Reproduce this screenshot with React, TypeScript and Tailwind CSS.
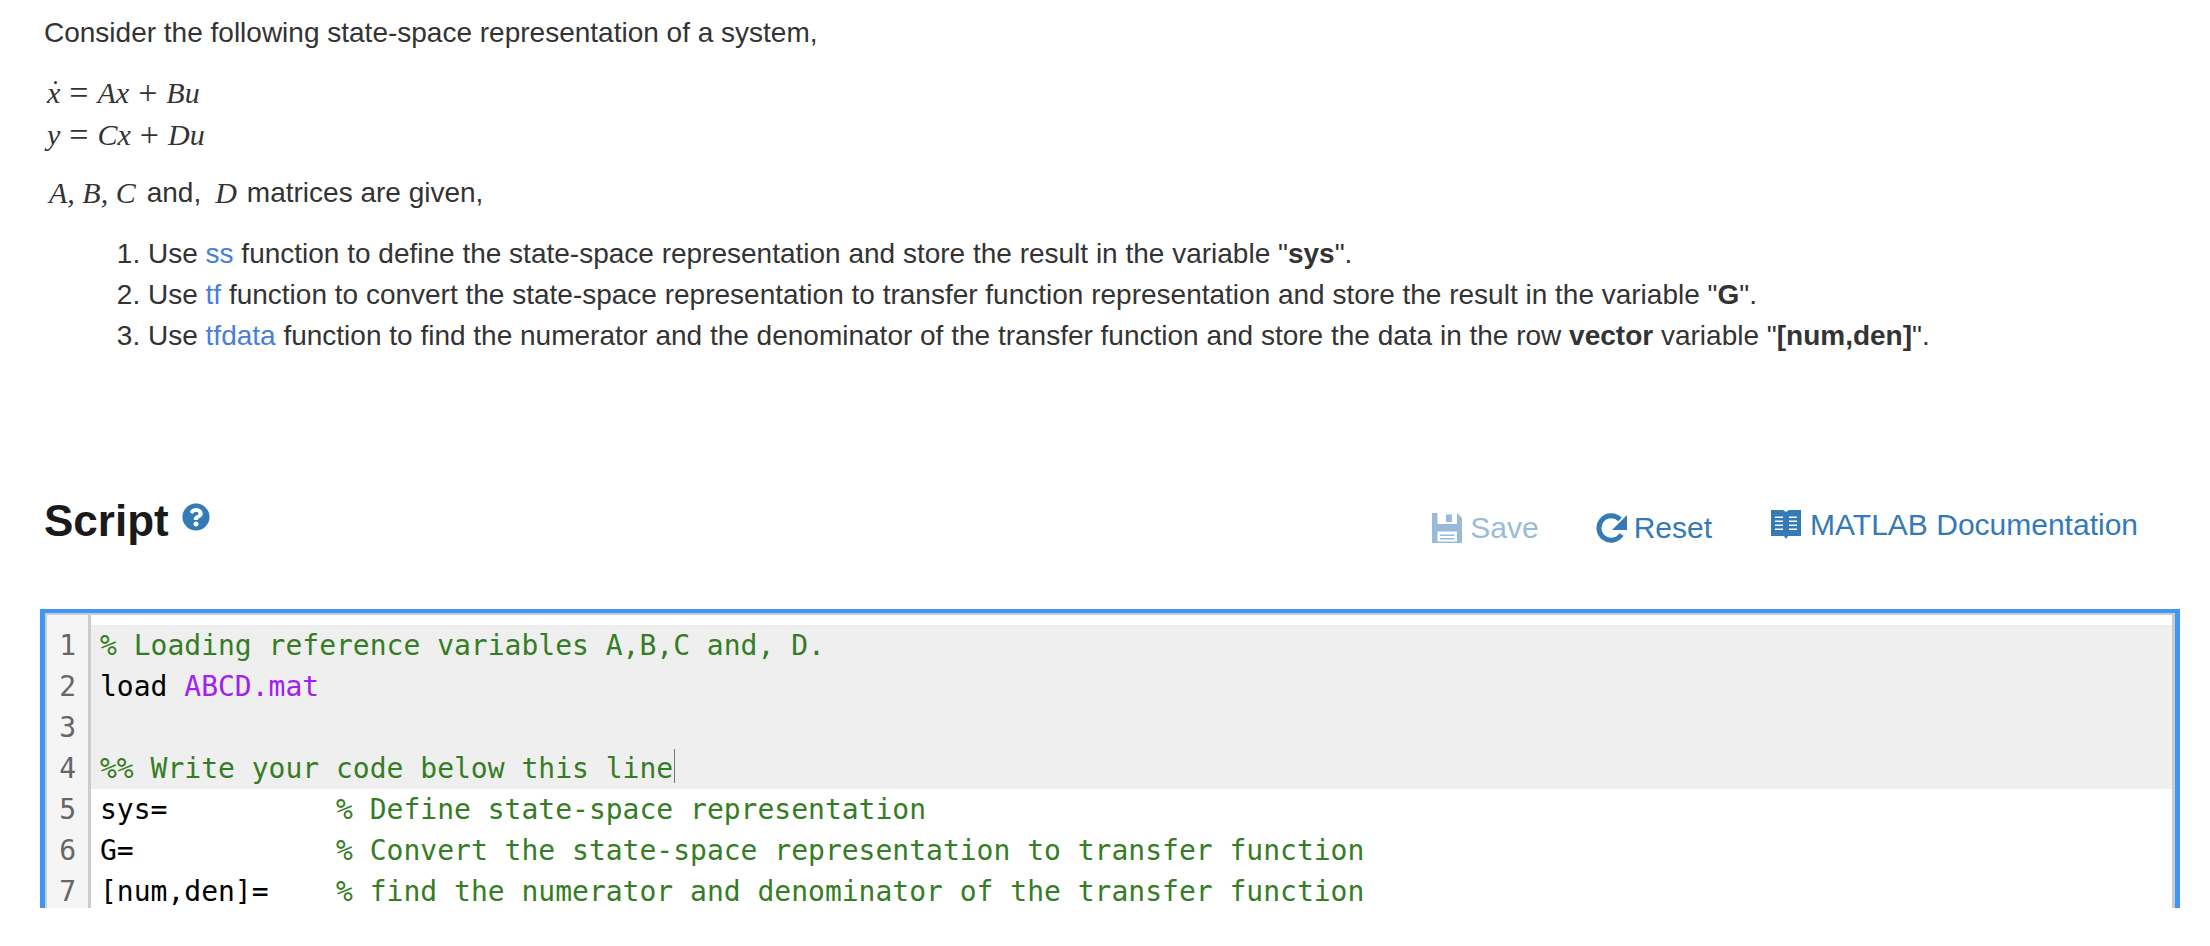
import { FaQuestionCircle } from "react-icons/fa";

const bodyFont = "font-['Liberation_Sans',Arial,sans-serif]";
const mathFont = "font-['Liberation_Serif','Times_New_Roman',serif] italic";

function SaveIcon() {
  return (
    <svg width="30" height="30" viewBox="0 0 30 30" className="shrink-0">
      <path
        fillRule="evenodd"
        fill="currentColor"
        d="M0 0H25L30 5V30H0ZM5.5 0V11H25V0ZM14 1.5H20V9H14ZM5.5 18.5V28.5H25V18.5ZM8 21.5H22.5V23H8ZM8 25H22.5V26.5H8Z"
      />
    </svg>
  );
}

function ResetIcon() {
  return (
    <svg width="31" height="30" viewBox="0 0 31 30" className="shrink-0">
      <path d="M25.5 21.5A12.2 12.2 0 1 1 24 6.5" fill="none" stroke="currentColor" strokeWidth="5" />
      <path d="M31 2V17H16Z" fill="currentColor" />
    </svg>
  );
}

function BookIcon() {
  return (
    <svg width="30" height="30" viewBox="0 0 30 30" className="shrink-0">
      <path
        fillRule="evenodd"
        fill="currentColor"
        d="M0 0H12L15 2L18 0H30V26H17L15 29L13 26H0ZM4 6.5V8H12V6.5ZM4 10.5V12H12V10.5ZM4 14.5V16H12V14.5ZM4 18.5V20H12V18.5ZM18 6.5V8H26V6.5ZM18 10.5V12H26V10.5ZM18 14.5V16H26V14.5ZM18 18.5V20H26V18.5Z"
      />
    </svg>
  );
}

function Op({ children }: { children: React.ReactNode }) {
  return <span className="mx-[9px] text-[34px] not-italic leading-none">{children}</span>;
}

const lines: React.ReactNode[] = [
  <span className="text-[#357d24]">% Loading reference variables A,B,C and, D.</span>,
  <>
    load <span className="text-[#a020f0]">ABCD.mat</span>
  </>,
  "",
  <span className="relative text-[#357d24]">
    %% Write your code below this line
    <span className="absolute right-[-2px] top-[-3px] h-[34px] w-[1px] bg-[#777]" />
  </span>,
  <>
    {"sys=          "}
    <span className="text-[#357d24]">% Define state-space representation</span>
  </>,
  <>
    {"G=            "}
    <span className="text-[#357d24]">% Convert the state-space representation to transfer function</span>
  </>,
  <>
    {"[num,den]=    "}
    <span className="text-[#357d24]">% find the numerator and denominator of the transfer function</span>
  </>,
];

export default function App() {
  return (
    <div className={`h-[946px] w-[2210px] overflow-hidden bg-white text-[28px] leading-[41px] text-[#333] ${bodyFont}`}>
      <div className="px-[44px] pt-[12px]">
        <p>Consider the following state-space representation of a system,</p>
        <div className={`mt-[19px] pl-[3px] text-[30px] leading-[42px] ${mathFont}`}>
          <div className="relative flex items-center">
            <span className="absolute left-[7px] top-[9px] h-[3px] w-[3px] rounded-full bg-[#333]" />
            x<Op>=</Op>Ax<Op>+</Op>Bu
          </div>
          <div className="flex items-center">
            y<Op>=</Op>Cx<Op>+</Op>Du
          </div>
        </div>
        <p className="mt-[16px] flex pl-[5px]">
          <span className={`text-[30px] ${mathFont}`}>A, B, C</span>
          <span className="ml-[11px]">and,</span>
          <span className={`ml-[14px] text-[30px] ${mathFont}`}>D</span>
          <span className="ml-[10px]">matrices are given,</span>
        </p>
        <ol className="mt-[20px] list-decimal pl-[104px]">
          <li>
            Use <span className="text-[#4a7fd6]">ss</span> function to define the state-space representation and store the result in the variable "<b>sys</b>".
          </li>
          <li>
            Use <span className="text-[#4a7fd6]">tf</span> function to convert the state-space representation to transfer function representation and store the result in the variable "<b>G</b>".
          </li>
          <li>
            Use <span className="text-[#4a7fd6]">tfdata</span> function to find the numerator and the denominator of the transfer function and store the data in the row <b>vector</b> variable "<b>[num,den]</b>".
          </li>
        </ol>
      </div>

      <div className="mt-[139px] flex items-start justify-between pl-[44px] pr-[72px]">
        <div className="flex items-center gap-[13px]">
          <h2 className="text-[44px] font-bold leading-[52px] text-[#1a1a1a]">Script</h2>
          <FaQuestionCircle className="mb-[8px] text-[28px] text-[#337ab7]" />
        </div>
        <div className="flex items-center text-[#337ab7] text-[30px] leading-[40px]">
          <span className="mt-[13px] flex items-center gap-[8px] opacity-50">
            <SaveIcon />
            Save
          </span>
          <span className="ml-[57px] mt-[13px] flex items-center gap-[7px]">
            <ResetIcon />
            Reset
          </span>
          <span className="ml-[59px] mt-[7px] flex items-center gap-[9px]">
            <BookIcon />
            MATLAB Documentation
          </span>
        </div>
      </div>

      <div className="ml-[40px] mt-[61px] h-[299px] w-[2140px] overflow-hidden border-x-[5px] border-t-[4px] border-[#4096f5]">
        <div className="h-full border-r-[3px] border-t-[2px] border-[#ccc]">
          <div className="flex h-full font-['DejaVu_Sans_Mono',monospace] text-[28px] leading-[41px]">
            <div className="h-full w-[46px] shrink-0 border-l-[2px] border-r-[3px] border-[#ccc] bg-[#f5f5f5] pt-[10px] pr-[12px] text-right text-[#666]">
              {lines.map((_, i) => (
                <div key={i}>{i + 1}</div>
              ))}
            </div>
            <div className="min-w-0 flex-1 pt-[10px]">
              {lines.map((line, i) => (
                <div
                  key={i}
                  className={`h-[41px] whitespace-pre pl-[9px] text-black ${i < 4 ? "bg-[#efefef]" : "bg-white"}`}
                >
                  {line}
                </div>
              ))}
            </div>
          </div>
        </div>
      </div>
    </div>
  );
}
